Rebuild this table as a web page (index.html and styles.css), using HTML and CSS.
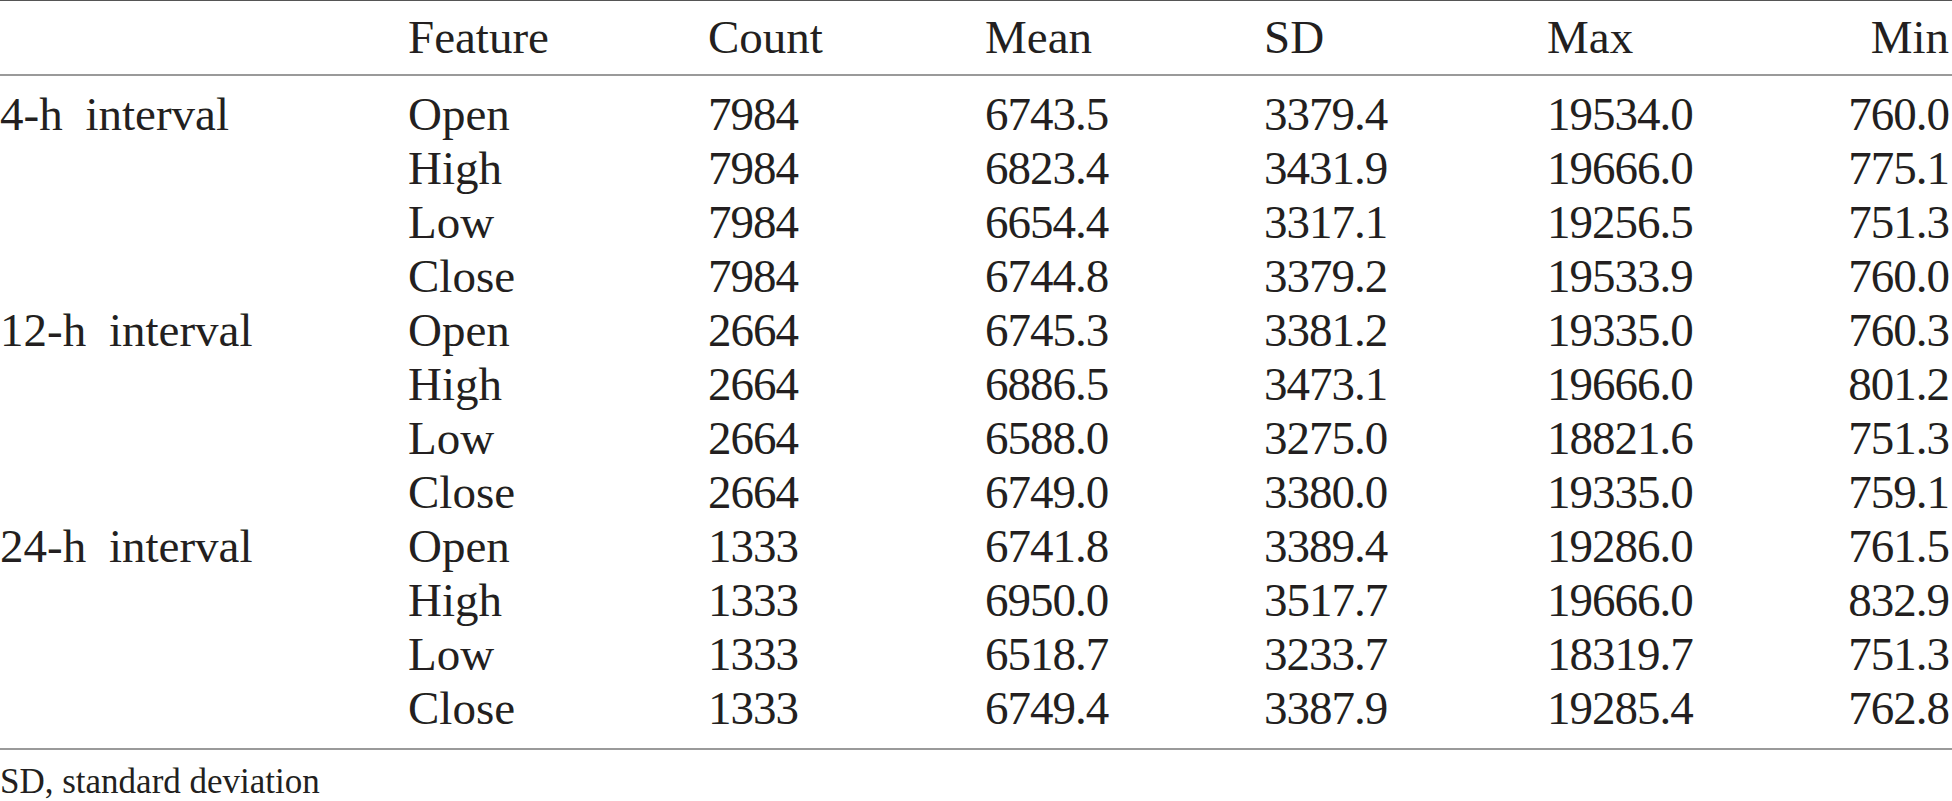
FILE: index.html
```html
<!DOCTYPE html>
<html lang="en">
<head>
<meta charset="utf-8">
<title>Descriptive statistics</title>
<link rel="stylesheet" href="styles.css">
</head>
<body>
<div class="page">
  <table class="stats">
    <colgroup>
      <col class="c-group"><col class="c-feat"><col class="c-count"><col class="c-mean"><col class="c-sd"><col class="c-max"><col class="c-min">
    </colgroup>
    <thead>
      <tr>
        <th></th><th>Feature</th><th>Count</th><th>Mean</th><th>SD</th><th>Max</th><th class="r">Min</th>
      </tr>
    </thead>
    <tbody>
      <tr class="first"><td class="grp">4-h interval</td><td>Open</td><td class="n">7984</td><td class="n">6743.5</td><td class="n">3379.4</td><td class="n">19534.0</td><td class="n r">760.0</td></tr>
      <tr><td></td><td>High</td><td class="n">7984</td><td class="n">6823.4</td><td class="n">3431.9</td><td class="n">19666.0</td><td class="n r">775.1</td></tr>
      <tr><td></td><td>Low</td><td class="n">7984</td><td class="n">6654.4</td><td class="n">3317.1</td><td class="n">19256.5</td><td class="n r">751.3</td></tr>
      <tr><td></td><td>Close</td><td class="n">7984</td><td class="n">6744.8</td><td class="n">3379.2</td><td class="n">19533.9</td><td class="n r">760.0</td></tr>
      <tr><td class="grp">12-h interval</td><td>Open</td><td class="n">2664</td><td class="n">6745.3</td><td class="n">3381.2</td><td class="n">19335.0</td><td class="n r">760.3</td></tr>
      <tr><td></td><td>High</td><td class="n">2664</td><td class="n">6886.5</td><td class="n">3473.1</td><td class="n">19666.0</td><td class="n r">801.2</td></tr>
      <tr><td></td><td>Low</td><td class="n">2664</td><td class="n">6588.0</td><td class="n">3275.0</td><td class="n">18821.6</td><td class="n r">751.3</td></tr>
      <tr><td></td><td>Close</td><td class="n">2664</td><td class="n">6749.0</td><td class="n">3380.0</td><td class="n">19335.0</td><td class="n r">759.1</td></tr>
      <tr><td class="grp">24-h interval</td><td>Open</td><td class="n">1333</td><td class="n">6741.8</td><td class="n">3389.4</td><td class="n">19286.0</td><td class="n r">761.5</td></tr>
      <tr><td></td><td>High</td><td class="n">1333</td><td class="n">6950.0</td><td class="n">3517.7</td><td class="n">19666.0</td><td class="n r">832.9</td></tr>
      <tr><td></td><td>Low</td><td class="n">1333</td><td class="n">6518.7</td><td class="n">3233.7</td><td class="n">18319.7</td><td class="n r">751.3</td></tr>
      <tr class="last"><td></td><td>Close</td><td class="n">1333</td><td class="n">6749.4</td><td class="n">3387.9</td><td class="n">19285.4</td><td class="n r">762.8</td></tr>
    </tbody>
  </table>
  <p class="note">SD, standard deviation</p>
</div>
</body>
</html>
```
FILE: styles.css
```css
html, body {
  margin: 0;
  padding: 0;
  background: #ffffff;
}

.page {
  width: 1952px;
  font-family: "Liberation Serif", "Times New Roman", serif;
  color: #231f20;
}

.stats {
  width: 1952px;
  border-collapse: collapse;
  table-layout: fixed;
  font-size: 47px;
  line-height: 54px;
  border-top: 1px solid #555555;
  border-bottom: 2px solid #9a9a9a;
}

.c-group { width: 408px; }
.c-feat { width: 300px; }
.c-count { width: 277px; }
.c-mean { width: 279px; }
.c-sd { width: 283px; }
.c-max { width: 200px; }
.c-min { width: 205px; }

.stats th,
.stats td {
  padding: 0;
  text-align: left;
  font-weight: normal;
  white-space: nowrap;
  vertical-align: baseline;
}

.stats thead th {
  padding-top: 9px;
  padding-bottom: 10px;
  border-bottom: 2px solid #9a9a9a;
}

.stats .r {
  text-align: right;
  padding-right: 3px;
}

.stats .n {
  letter-spacing: -1px;
}

.stats .grp {
  word-spacing: 11px;
}

.stats tr.first td {
  padding-top: 11px;
}

.stats tr.last td {
  padding-bottom: 13px;
}

.note {
  margin: 0;
  padding-top: 12px;
  font-size: 35px;
  line-height: 40px;
}
```
